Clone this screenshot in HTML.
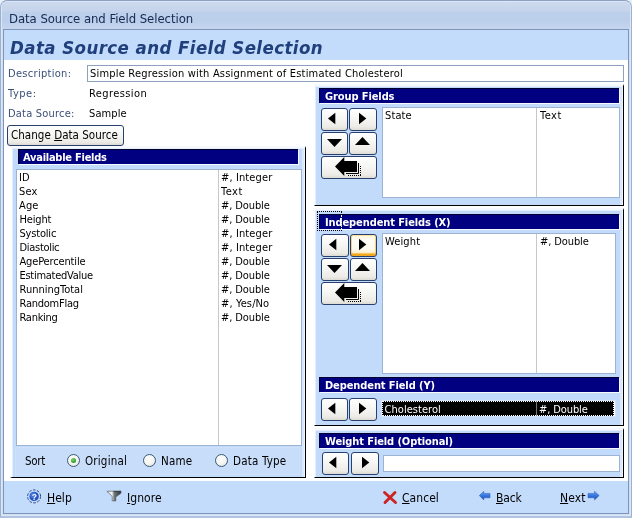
<!DOCTYPE html>
<html>
<head>
<meta charset="utf-8">
<title>Data Source and Field Selection</title>
<style>
html,body{margin:0;padding:0;}
body{width:632px;height:518px;overflow:hidden;background:#e9eff8;position:relative;
  font-family:"DejaVu Sans Condensed","DejaVu Sans","Liberation Sans",sans-serif;font-size:11px;color:#000;}
.abs{position:absolute;}
#frame{position:absolute;left:0;top:0;width:630px;height:515px;border:1px solid #8fa3c1;border-bottom:2px solid #b0c3df;
  border-left-color:#9db1cf;border-right-color:#9db1cf;
  border-radius:7px 7px 0 0;background:#d0dff4;box-shadow:inset 0 0 0 1px #dbe7f8;}
#tbar{position:absolute;left:2px;top:2px;width:628px;height:27px;border-radius:5px 5px 0 0;
  background:linear-gradient(#ccd9ee 0%,#c6d5ec 30%,#bccfeb 40%,#bbceeb 70%,#c5d5ee 100%);}
#ttext{position:absolute;will-change:transform;left:9px;top:11px;font-size:13px;line-height:16px;color:#15294f;white-space:nowrap;letter-spacing:-0.05px;}
#client{position:absolute;left:3px;top:29px;width:624px;height:483px;border:1px solid #7f95b7;background:#fff;}
/* everything inside #page is positioned in page coordinates */
#page{position:absolute;left:0;top:0;width:632px;height:518px;will-change:transform;}
#band{left:4px;top:30px;width:624px;height:30px;background:#c4dcfb;}
#h1{left:10px;top:36px;font:italic bold 18.5px/24px "DejaVu Sans Condensed","Liberation Sans",sans-serif;color:#1f3f7d;white-space:nowrap;letter-spacing:0.42px;}
.lbl{color:#3b5078;white-space:nowrap;line-height:14px;font-size:11px;letter-spacing:0.45px;}
.val{color:#000;white-space:nowrap;line-height:14px;font-size:11px;letter-spacing:0.2px;}
#desc{left:87px;top:65px;width:535px;height:15px;border:1px solid #8da0be;background:#fff;}
.xpbtn{position:absolute;box-sizing:border-box;border:1px solid #27406e;border-radius:3px;
  background:linear-gradient(#ffffff 0%,#f6f6f4 45%,#ecebe6 85%,#dcdad2 100%);}
.xpbtn.hot{background:linear-gradient(#fff6d8 0%,#fffdf6 25%,#fdf8ea 70%,#fbe2a0 100%);box-shadow:inset 0 -2px 0 #f3a61f, inset 0 1px 0 #fbe3a0, inset 1px 0 0 #f9d27c, inset -1px 0 0 #f9d27c, inset 0 -3px 0 #f9c55c;}
.panel{position:absolute;box-sizing:border-box;background:#c3dbfa;border-top:2px solid #f6f9ff;border-left:1px solid #e6effc;
  border-right:1px solid #000;border-bottom:1px solid #000;box-shadow:inset 1px 1px 0 #e4eefc, inset -1px 0 0 #eef4fe, inset -3px 0 0 #dbe8fc;}
.hdr{position:absolute;background:#000080;color:#fff;font-weight:bold;font-size:11px;line-height:15px;height:15px;white-space:nowrap;
  box-sizing:border-box;padding-left:5px;letter-spacing:-0.1px;border-top:1px solid #000030;border-left:1px solid #000030;box-shadow:1px 1px 0 #f4f8ff;}
.list{position:absolute;box-sizing:border-box;background:#fff;border:1px solid #9db3d3;}
.row{position:absolute;left:0;height:14px;line-height:14px;white-space:nowrap;font-size:11px;letter-spacing:0.12px;}
.vdiv{position:absolute;top:0;width:1px;background:#c4c8cf;}
u{text-decoration:underline;text-underline-offset:1px;}
.radio{position:absolute;width:11px;height:11px;border:1px solid #3a5a7c;border-radius:50%;
  background:radial-gradient(circle at 40% 35%,#ffffff 0%,#f4f4f0 55%,#d9d8d0 100%);}
.radio.on::after{content:"";position:absolute;left:3px;top:3px;width:5px;height:5px;border-radius:50%;
  background:radial-gradient(circle at 40% 35%,#7bd36b,#2c9a28 70%,#1f7a1f);}
#bbar{left:4px;top:481px;width:624px;height:32px;background:#c4dcfb;}
.btxt{position:absolute;font-size:12px;line-height:16px;color:#000;white-space:nowrap;letter-spacing:0.35px;}
svg{position:absolute;overflow:visible;}
</style>
</head>
<body>
<div id="frame"></div>
<div id="tbar"></div>
<div id="ttext">Data Source and Field Selection</div>
<div id="client"></div>
<div id="page">
  <div id="band" class="abs"></div>
  <div id="h1" class="abs">Data Source and Field Selection</div>

  <div class="abs lbl" style="left:8px;top:67px;letter-spacing:0.3px;">Description:</div>
  <div id="desc" class="abs"></div>
  <div class="abs val" style="left:90px;top:67px;">Simple Regression with Assignment of Estimated Cholesterol</div>
  <div class="abs lbl" style="left:8px;top:87px;letter-spacing:0.55px;">Type:</div>
  <div class="abs val" style="left:89px;top:87px;letter-spacing:0.4px;">Regression</div>
  <div class="abs lbl" style="left:8px;top:107px;letter-spacing:0.2px;">Data Source:</div>
  <div class="abs val" style="left:89px;top:107px;letter-spacing:0.1px;">Sample</div>

  <div class="xpbtn" style="left:7px;top:125px;width:117px;height:21px;"></div>
  <div class="abs val" style="left:11px;top:128px;font-size:11.5px;letter-spacing:0.03px;">Change <u>D</u>ata Source</div>

  <!-- Available Fields -->
  <div class="panel" style="left:10px;top:146px;width:296px;height:332px;border-left:2px solid #fff;"></div>
  <div class="hdr" style="left:18px;top:149px;width:280px;letter-spacing:-0.25px;padding-left:4px;">Available Fields</div>
  <div class="list" style="left:16px;top:169px;width:286px;height:277px;">
    <div class="vdiv" style="left:201px;height:275px;"></div>
    <div class="row" style="left:2px;top:1px;">ID</div><div class="row" style="left:204px;top:1px;">#, Integer</div>
    <div class="row" style="left:2px;top:15px;">Sex</div><div class="row" style="left:204px;top:15px;letter-spacing:0.5px;">Text</div>
    <div class="row" style="left:2px;top:29px;">Age</div><div class="row" style="left:204px;top:29px;letter-spacing:-0.1px;">#, Double</div>
    <div class="row" style="left:2.5px;top:43px;letter-spacing:-0.17px;">Height</div><div class="row" style="left:204px;top:43px;letter-spacing:-0.1px;">#, Double</div>
    <div class="row" style="left:2.5px;top:57px;letter-spacing:-0.19px;">Systolic</div><div class="row" style="left:204px;top:57px;">#, Integer</div>
    <div class="row" style="left:2.5px;top:71px;letter-spacing:-0.3px;">Diastolic</div><div class="row" style="left:204px;top:71px;">#, Integer</div>
    <div class="row" style="left:2.5px;top:85px;letter-spacing:-0.15px;">AgePercentile</div><div class="row" style="left:204px;top:85px;letter-spacing:-0.1px;">#, Double</div>
    <div class="row" style="left:2.5px;top:99px;letter-spacing:-0.27px;">EstimatedValue</div><div class="row" style="left:204px;top:99px;letter-spacing:-0.1px;">#, Double</div>
    <div class="row" style="left:2.5px;top:113px;letter-spacing:0px;">RunningTotal</div><div class="row" style="left:204px;top:113px;letter-spacing:-0.1px;">#, Double</div>
    <div class="row" style="left:2.5px;top:127px;letter-spacing:-0.25px;">RandomFlag</div><div class="row" style="left:204px;top:127px;">#, Yes/No</div>
    <div class="row" style="left:2.5px;top:141px;letter-spacing:-0.27px;">Ranking</div><div class="row" style="left:204px;top:141px;letter-spacing:-0.1px;">#, Double</div>
  </div>
  <div class="abs" style="left:16px;top:448px;width:283px;height:26px;background:#c8ddf9;box-shadow:0 0 0 1px #cfe1fa;"></div>
  <div class="abs val" style="left:25px;top:454px;font-size:11.5px;color:#000;letter-spacing:-0.3px;">Sort</div>
  <div class="radio on" style="left:67px;top:454px;"></div>
  <div class="abs val" style="left:85px;top:454px;font-size:11.5px;color:#000;">Original</div>
  <div class="radio" style="left:143px;top:454px;"></div>
  <div class="abs val" style="left:161px;top:454px;font-size:11.5px;color:#000;">Name</div>
  <div class="radio" style="left:215px;top:454px;"></div>
  <div class="abs val" style="left:233px;top:454px;font-size:11.5px;color:#000;">Data Type</div>

  <!-- Group Fields -->
  <div class="panel" style="left:314px;top:84px;width:310px;height:122px;border-left:1px solid #fff;"></div>
  <div class="hdr" style="left:319px;top:88px;width:300px;">Group Fields</div>
  <div class="list" style="left:382px;top:107px;width:238px;height:91px;">
    <div class="vdiv" style="left:153px;height:89px;"></div>
    <div class="row" style="left:2px;top:1px;">State</div><div class="row" style="left:157px;top:1px;letter-spacing:0.5px;">Text</div>
  </div>
  <div class="xpbtn" style="left:321px;top:108px;width:27px;height:23px;"></div>
  <div class="xpbtn" style="left:349px;top:108px;width:28px;height:23px;"></div>
  <div class="xpbtn" style="left:321px;top:132px;width:27px;height:23px;"></div>
  <div class="xpbtn" style="left:349px;top:132px;width:28px;height:23px;"></div>
  <div class="xpbtn" style="left:321px;top:156px;width:56px;height:23px;"></div>
  <svg style="left:321px;top:108px;" width="56" height="70" viewBox="0 0 56 70">
    <path d="M7 10.5 L14.3 4.7 L14.3 16.3 Z" fill="#000"/>
    <path d="M45.3 10.5 L38 4.7 L38 16.3 Z" fill="#000"/>
    <path d="M6 31 L21 31 L13.5 39 Z" fill="#000"/>
    <path d="M34 37 L49 37 L41.5 29 Z" fill="#000"/>
    <g id="bigarrow">
    <path d="M14 58.5 L23.3 49 L23.3 53 L36 53 L36 64 L23.3 64 L23.3 68 Z" fill="#000"/>
    <path d="M25 65.5 H37.5 V55" fill="none" stroke="#000" stroke-width="1"/>
    <path d="M27 67.5 H40 M39.5 67 V57" fill="none" stroke="#000" stroke-width="1" stroke-dasharray="1 1"/>
    </g>
  </svg>

  <!-- Independent / Dependent -->
  <div class="panel" style="left:314px;top:208px;width:310px;height:218px;border-left:1px solid #fff;"></div>
  <div class="hdr" style="left:319px;top:214px;width:300px;">Independent Fields (X)</div>
  <div class="abs" style="left:317px;top:211px;width:23px;height:18px;border:1px dotted #000;"></div><div class="abs" style="left:341px;top:215px;width:0;height:14px;border-left:1px dotted #fff;"></div>
  <div class="list" style="left:382px;top:233px;width:234px;height:141px;">
    <div class="vdiv" style="left:153px;height:139px;"></div>
    <div class="row" style="left:2px;top:1px;">Weight</div><div class="row" style="left:157px;top:1px;letter-spacing:-0.1px;">#, Double</div>
  </div>
  <div class="xpbtn" style="left:321px;top:234px;width:28px;height:23px;"></div>
  <div class="xpbtn hot" style="left:350px;top:234px;width:27px;height:23px;"></div>
  <div class="xpbtn" style="left:321px;top:258px;width:28px;height:23px;"></div>
  <div class="xpbtn" style="left:350px;top:258px;width:27px;height:23px;"></div>
  <div class="xpbtn" style="left:321px;top:282px;width:56px;height:23px;"></div>
  <svg style="left:321px;top:234px;" width="56" height="70" viewBox="0 0 56 70">
    <path d="M8 10.5 L15.3 4.7 L15.3 16.3 Z" fill="#000"/>
    <path d="M45.3 10.5 L38 4.7 L38 16.3 Z" fill="#000"/>
    <path d="M6 31 L21 31 L13.5 39 Z" fill="#000"/>
    <path d="M34 37 L49 37 L41.5 29 Z" fill="#000"/>
    <path d="M14 58.5 L23.3 49 L23.3 53 L36 53 L36 64 L23.3 64 L23.3 68 Z" fill="#000"/>
    <path d="M25 65.5 H37.5 V55" fill="none" stroke="#000" stroke-width="1"/>
    <path d="M27 67.5 H40 M39.5 67 V57" fill="none" stroke="#000" stroke-width="1" stroke-dasharray="1 1"/>
  </svg>

  <div class="hdr" style="left:319px;top:377px;width:300px;">Dependent Field (Y)</div>
  <div class="xpbtn" style="left:321px;top:398px;width:27px;height:23px;"></div>
  <div class="xpbtn" style="left:349px;top:398px;width:28px;height:23px;"></div>
  <svg style="left:321px;top:398px;" width="56" height="22" viewBox="0 0 56 22">
    <path d="M7 10.5 L14.3 4.7 L14.3 16.3 Z" fill="#000"/>
    <path d="M45.3 10.5 L38 4.7 L38 16.3 Z" fill="#000"/>
  </svg>
  <div class="list" style="left:381px;top:400px;width:235px;height:17px;border-color:#d4e3fa;">
    <div class="abs" style="left:0;top:0;width:230px;height:13px;background:#000;border:1px dotted #fff;"></div>
    <div class="vdiv" style="left:154px;height:15px;background:#777;"></div>
    <div class="row" style="left:2.5px;top:2px;color:#fff;letter-spacing:0.05px;">Cholesterol</div><div class="row" style="left:157px;top:2px;color:#fff;letter-spacing:-0.1px;">#, Double</div>
  </div>

  <!-- Weight -->
  <div class="panel" style="left:314px;top:428px;width:310px;height:50px;border-left:1px solid #fff;"></div>
  <div class="hdr" style="left:319px;top:433px;width:300px;">Weight Field (Optional)</div>
  <div class="xpbtn" style="left:322px;top:452px;width:27px;height:23px;"></div>
  <div class="xpbtn" style="left:351px;top:452px;width:28px;height:23px;"></div>
  <svg style="left:322px;top:452px;" width="57" height="22" viewBox="0 0 57 22">
    <path d="M7 10.5 L14.3 4.7 L14.3 16.3 Z" fill="#000"/>
    <path d="M47.3 10.5 L40 4.7 L40 16.3 Z" fill="#000"/>
  </svg>
  <div class="list" style="left:383px;top:455px;width:237px;height:17px;"></div>

  <!-- bottom bar -->
  <div id="bbar" class="abs"></div>
  <svg style="left:27px;top:489px;" width="15" height="15" viewBox="0 0 15 15">
    <circle cx="7.1" cy="7.4" r="6.5" fill="none" stroke="#18306e" stroke-width="0.9" stroke-dasharray="2.6 1.5"/>
    <circle cx="7.1" cy="7.4" r="4.7" fill="#2553bf"/>
    <circle cx="6.3" cy="6.2" r="3" fill="#4f80e6" opacity="0.75"/>
    <text x="7.3" y="10.6" font-family="Liberation Sans, sans-serif" font-weight="bold" font-size="8.5" fill="#fff" text-anchor="middle">?</text>
  </svg>
  <div class="btxt" style="left:47px;top:490px;letter-spacing:0.05px;"><u>H</u>elp</div>
  <svg style="left:106px;top:490px;" width="16" height="12" viewBox="0 0 16 12">
    <defs><linearGradient id="fg" x1="0" y1="0" x2="1" y2="0">
      <stop offset="0" stop-color="#d2d5da"/><stop offset="0.36" stop-color="#f6f1f3"/><stop offset="0.52" stop-color="#70787b"/><stop offset="1" stop-color="#2b3538"/></linearGradient></defs>
    <path d="M0.9 1.3 L15 0.9 L15 3.2 L9.8 7 L9.8 10.9 L6.2 10.9 L6.2 6.4 Z" fill="url(#fg)" stroke="#4a5356" stroke-width="0.6" stroke-linejoin="round"/>
    <path d="M7 1.1 L15 0.9 L15 2.4 L8 2 Z" fill="#3a4447"/>
  </svg>
  <div class="btxt" style="left:127px;top:490px;letter-spacing:0.05px;"><u>I</u>gnore</div>
  <svg style="left:383px;top:491px;" width="14" height="13" viewBox="0 0 14 13">
    <path d="M1.5 1.5 L12.5 11.5 M12 1.5 L2 11.5" stroke="#cc2420" stroke-width="2.9" stroke-linecap="round" fill="none"/>
  </svg>
  <div class="btxt" style="left:402px;top:490px;letter-spacing:0.05px;"><u>C</u>ancel</div>
  <svg style="left:479px;top:491px;" width="12" height="10" viewBox="0 0 12 10">
    <defs><linearGradient id="ag" x1="0" y1="0" x2="0" y2="1"><stop offset="0" stop-color="#6aa6f4"/><stop offset="0.5" stop-color="#3577e0"/><stop offset="1" stop-color="#1b4aa6"/></linearGradient></defs>
    <path d="M0.3 4.6 L4.8 0.3 L4.8 2.4 L11 2.4 L11 6.8 L4.8 6.8 L4.8 8.9 Z" fill="url(#ag)" stroke="#2458b4" stroke-width="0.5"/>
  </svg>
  <div class="btxt" style="left:496px;top:490px;letter-spacing:-0.15px;"><u>B</u>ack</div>
  <div class="btxt" style="left:560px;top:490px;letter-spacing:0.1px;"><u>N</u>ext</div>
  <svg style="left:588px;top:491px;" width="12" height="10" viewBox="0 0 12 10">
    <path d="M11.2 4.6 L6.5 0.3 L6.5 2.4 L0 2.4 L0 6.8 L6.5 6.8 L6.5 8.9 Z" fill="url(#ag)" stroke="#2458b4" stroke-width="0.5"/>
  </svg>
</div>
</body>
</html>
